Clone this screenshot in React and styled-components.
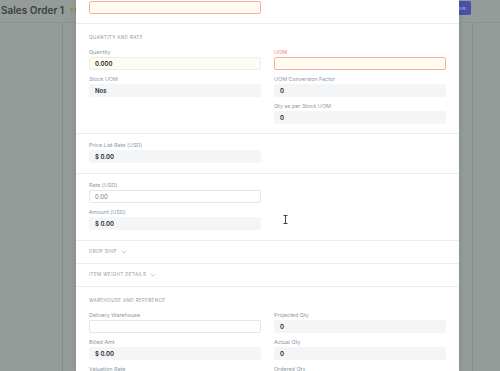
import React from 'react';
import styled, { createGlobalStyle } from 'styled-components';

const GlobalStyle = createGlobalStyle`
  html, body { margin: 0; padding: 0; }
  body {
    background: #959b99;
    font-family: Inter, "Noto Sans", "Liberation Sans", sans-serif;
    overflow: hidden;
  }
`;

const Screen = styled.div`
  position: relative;
  width: 500px;
  height: 371px;
  overflow: hidden;
  background: #959b99;
`;

const PageHead = styled.div`
  height: 23px;
  display: flex;
  align-items: center;
  padding: 0 1px;
  border-bottom: 1px solid #8c9290;
  box-sizing: border-box;
`;

const PageTitle = styled.div`
  font-size: 10px;
  font-weight: 600;
  color: #3b4143;
  margin-top: -3px;
`;

const Indicator = styled.span`
  display: inline-flex;
  align-items: center;
  gap: 2px;
  margin-left: 6px;
  margin-top: -3px;
  font-size: 5px;
  color: #6e5a3a;
  &::before {
    content: '';
    width: 3px;
    height: 3px;
    border-radius: 50%;
    background: #b7812a;
  }
`;

const SaveButton = styled.div`
  margin-left: auto;
  margin-right: 28px;
  margin-top: -7px;
  width: 22px;
  height: 14px;
  border-radius: 2px;
  background: #4a52a8;
  color: #a7abd0;
  font-size: 5px;
  display: flex;
  align-items: center;
  justify-content: center;
`;

const PageBody = styled.div`
  margin: 0 27px 0 62px;
  height: 348px;
  border-left: 1px solid #878d8b;
  border-right: 1px solid #878d8b;
`;

const Modal = styled.div`
  position: absolute;
  top: 0;
  left: 76px;
  width: 383px;
  height: 371px;
  background: #ffffff;
  box-shadow: 0 0 6px rgba(0, 0, 0, 0.12);
  overflow: hidden;
`;

const Section = styled.div`
  padding: ${p => p.$pad || '9px 13px 10px'};
  border-bottom: 1px solid #ebeef0;
`;

const SectionHead = styled.div`
  font-size: 4.6px;
  line-height: 6px;
  letter-spacing: 0.35px;
  text-transform: uppercase;
  color: #8d99a6;
  margin: 2px 0 8px;
  display: flex;
  align-items: center;
  gap: 4px;
`;

const Collapsed = styled(SectionHead)`
  margin: 0;
`;

const Columns = styled.div`
  display: grid;
  grid-template-columns: 172px 172px;
  column-gap: 13px;
  align-items: start;
`;

const Column = styled.div`
  display: flex;
  flex-direction: column;
  gap: 6px;
`;

const Field = styled.div`
  display: flex;
  flex-direction: column;
  gap: 2px;
`;

const Label = styled.div`
  font-size: 5.4px;
  line-height: 6px;
  color: ${p => (p.$required ? '#f07f76' : '#8d99a6')};
`;

const Control = styled.div`
  height: 13px;
  box-sizing: border-box;
  border-radius: 2px;
  padding: 0 5px;
  display: flex;
  align-items: center;
  font-size: 6px;
  font-weight: ${p => (p.$plain ? 400 : 600)};
  color: ${p => (p.$plain ? '#6c7680' : '#1f272e')};
  background: ${p =>
    p.$variant === 'error' ? '#fffcef'
    : p.$variant === 'yellow' ? '#fffdf2'
    : p.$variant === 'input' ? '#ffffff'
    : '#f4f5f6'};
  border: 1px solid ${p =>
    p.$variant === 'error' ? '#f7aea8'
    : p.$variant === 'yellow' ? '#efeee6'
    : p.$variant === 'input' ? '#e4e7ea'
    : '#f4f5f6'};
`;

const Cursor = styled.svg`
  position: absolute;
  left: 207px;
  top: 215px;
`;

const Chevron = () => (
  <svg width="6" height="4" viewBox="0 0 6 4">
    <path d="M0.6 0.8L3 3.2 5.4 0.8" fill="none" stroke="#a8b1ba" strokeWidth="0.7" />
  </svg>
);

const F = ({ label, value, variant, plain, required }) => (
  <Field>
    <Label $required={required}>{label}</Label>
    <Control $variant={variant} $plain={plain}>{value}</Control>
  </Field>
);

export default function App() {
  return (
    <Screen>
      <GlobalStyle />
      <PageHead>
        <PageTitle>Sales Order 1</PageTitle>
        <Indicator>Not Saved</Indicator>
        <SaveButton>Save</SaveButton>
      </PageHead>
      <PageBody />

      <Modal>
        <Section $pad="1px 13px 9px">
          <Columns>
            <Control $variant="error" />
          </Columns>
        </Section>

        <Section $pad="9px 13px 9px">
          <SectionHead>Quantity and Rate</SectionHead>
          <Columns>
            <Column>
              <F label="Quantity" value="0.000" variant="yellow" />
              <F label="Stock UOM" value="Nos" />
            </Column>
            <Column>
              <F label="UOM" value="" variant="error" required />
              <F label="UOM Conversion Factor" value="0" />
              <F label="Qty as per Stock UOM" value="0" />
            </Column>
          </Columns>
        </Section>

        <Section $pad="8px 13px 10px">
          <Columns>
            <Column>
              <F label="Price List Rate (USD)" value="$ 0.00" />
            </Column>
          </Columns>
        </Section>

        <Section $pad="8px 13px 10px">
          <Columns>
            <Column>
              <F label="Rate (USD)" value="0.00" variant="input" plain />
              <F label="Amount (USD)" value="$ 0.00" />
            </Column>
          </Columns>
        </Section>

        <Section $pad="8px 13px 8px">
          <Collapsed>Drop Ship <Chevron /></Collapsed>
        </Section>

        <Section $pad="8px 13px 8px">
          <Collapsed>Item Weight Details <Chevron /></Collapsed>
        </Section>

        <Section $pad="9px 13px 10px">
          <SectionHead>Warehouse and Reference</SectionHead>
          <Columns>
            <Column>
              <F label="Delivery Warehouse" value="" variant="input" />
              <F label="Billed Amt" value="$ 0.00" />
              <F label="Valuation Rate" value="" />
            </Column>
            <Column>
              <F label="Projected Qty" value="0" />
              <F label="Actual Qty" value="0" />
              <F label="Ordered Qty" value="0" />
            </Column>
          </Columns>
        </Section>

        <Cursor width="5" height="9" viewBox="0 0 5 9">
          <path d="M0.5 0.5h4M2.5 0.5v8M0.5 8.5h4" stroke="#444" strokeWidth="1" fill="none" />
        </Cursor>
      </Modal>
    </Screen>
  );
}
